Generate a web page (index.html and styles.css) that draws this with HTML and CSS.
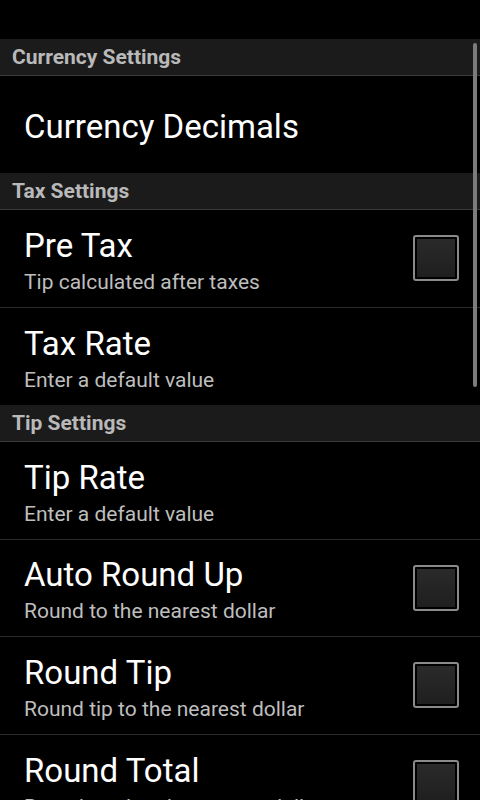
FILE: index.html
```html
<!DOCTYPE html>
<html lang="en">
<head>
    <meta charset="UTF-8">
    <meta name="viewport" content="width=device-width, initial-scale=1.0">
    <title>Settings</title>
    <link rel="stylesheet" href="styles.css">
</head>
<body>

<div class="screen">
    <div class="status-bar"></div>

    <div class="list">
        <!-- Currency -->
        <div class="category">Currency Settings</div>
        <div class="pref last">
            <div class="pref-text">
                <div class="pref-title">Currency Decimals</div>
            </div>
        </div>

        <!-- Tax -->
        <div class="category">Tax Settings</div>
        <div class="pref">
            <div class="pref-text">
                <div class="pref-title">Pre Tax</div>
                <div class="pref-summary">Tip calculated after taxes</div>
            </div>
            <div class="checkbox"><div class="checkbox-fill"></div></div>
        </div>
        <div class="pref last">
            <div class="pref-text">
                <div class="pref-title">Tax Rate</div>
                <div class="pref-summary">Enter a default value</div>
            </div>
        </div>

        <!-- Tip -->
        <div class="category">Tip Settings</div>
        <div class="pref">
            <div class="pref-text">
                <div class="pref-title">Tip Rate</div>
                <div class="pref-summary">Enter a default value</div>
            </div>
        </div>
        <div class="pref">
            <div class="pref-text">
                <div class="pref-title">Auto Round Up</div>
                <div class="pref-summary">Round to the nearest dollar</div>
            </div>
            <div class="checkbox"><div class="checkbox-fill"></div></div>
        </div>
        <div class="pref">
            <div class="pref-text">
                <div class="pref-title">Round Tip</div>
                <div class="pref-summary">Round tip to the nearest dollar</div>
            </div>
            <div class="checkbox"><div class="checkbox-fill"></div></div>
        </div>
        <div class="pref last">
            <div class="pref-text">
                <div class="pref-title">Round Total</div>
                <div class="pref-summary">Round total to the nearest dollar</div>
            </div>
            <div class="checkbox"><div class="checkbox-fill"></div></div>
        </div>

        <div class="scrollbar"></div>
    </div>
</div>

</body>
</html>
```

FILE: styles.css
```css
html, body {
    margin: 0;
    padding: 0;
    background-color: #000;
}
body {
    font-family: Roboto, "Noto Sans", sans-serif;
    color: #fff;
    overflow: hidden;
}
.screen {
    width: 480px;
    height: 800px;
    overflow: hidden;
}
.status-bar {
    height: 38.5px;
    background-color: #000;
}
.list {
    position: relative;
}
/* section headers */
.category {
    height: 35px;
    line-height: 34px;
    padding: 1px 0 0 12px;
    font-size: 21px;
    font-weight: bold;
    color: #b9b9b9;
    background-color: #1b1b1b;
    border-bottom: 1px solid #3a3a3a;
}
/* rows are 65dp at 1.5x */
.pref {
    display: flex;
    align-items: center;
    height: 96.5px;
    padding: 0 21px 0 24px;
    border-bottom: 1px solid #2b2b2b;
}
.pref.last {
    height: 97.5px;
    border-bottom: none;
}
.pref-text {
    flex: 1;
    margin-top: 4px;
}
.pref-title {
    font-size: 33px;
    line-height: 39px;
    color: #fff;
}
.pref-summary {
    font-size: 21px;
    line-height: 25px;
    margin-top: 5px;
    color: #bebebe;
}
.checkbox {
    width: 46px;
    height: 46px;
    box-sizing: border-box;
    border: 2px solid #8a8a8a;
    border-radius: 3px;
    padding: 2px;
    background-color: #000;
}
.checkbox-fill {
    width: 100%;
    height: 100%;
    background: linear-gradient(#2a2a2a, #1f1f1f);
}
.scrollbar {
    position: absolute;
    top: 4px;
    right: 3px;
    width: 4px;
    height: 344px;
    border-radius: 2px;
    background-color: #7c7c7c;
}
```
